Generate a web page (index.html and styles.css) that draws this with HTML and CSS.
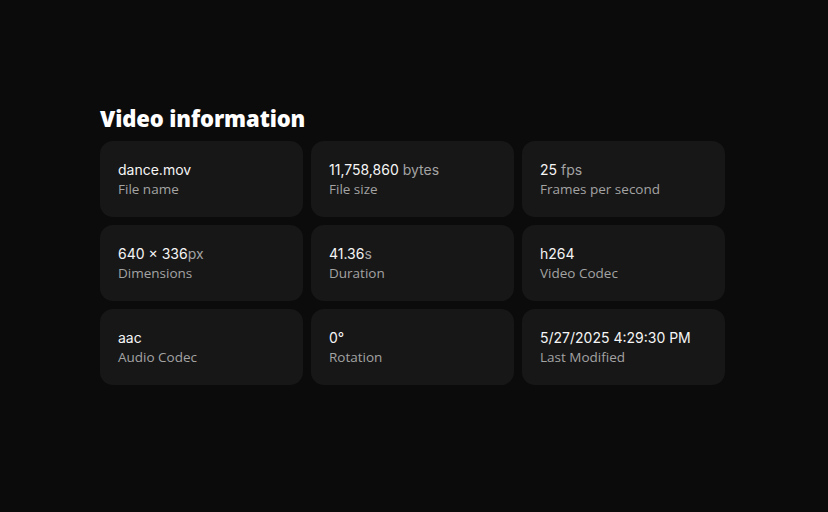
FILE: index.html
```html
<!DOCTYPE html>
<html>
<head>
<meta charset="utf-8">
<link rel="stylesheet" href="styles.css">
</head>
<body>
<main class="wrap">
  <h1 class="title">Video information</h1>
  <div class="grid">
    <div class="card"><div class="value">dance.mov</div><div class="label">File name</div></div>
    <div class="card"><div class="value">11,758,860 <span class="unit">bytes</span></div><div class="label">File size</div></div>
    <div class="card"><div class="value">25 <span class="unit">fps</span></div><div class="label">Frames per second</div></div>
    <div class="card"><div class="value">640 × 336<span class="unit">px</span></div><div class="label">Dimensions</div></div>
    <div class="card"><div class="value">41.36<span class="unit">s</span></div><div class="label">Duration</div></div>
    <div class="card"><div class="value">h264</div><div class="label">Video Codec</div></div>
    <div class="card"><div class="value">aac</div><div class="label">Audio Codec</div></div>
    <div class="card"><div class="value">0°</div><div class="label">Rotation</div></div>
    <div class="card"><div class="value">5/27/2025 4:29:30 PM</div><div class="label">Last Modified</div></div>
  </div>
</main>
</body>
</html>
```
FILE: styles.css
```css
html, body {
  margin: 0;
  padding: 0;
  background: #0b0b0b;
  height: 100%;
}
body {
  font-family: "Open Sans", "Noto Sans", sans-serif;
  color: #f5f5f5;
}
.wrap {
  width: 625px;
  margin-left: 100px;
  padding-top: 102px;
}
.title {
  margin: 0 0 7px 0;
  font-family: "Open Sans", "Noto Sans", sans-serif;
  font-weight: 800;
  font-size: 22px;
  line-height: 32px;
  letter-spacing: -0.1px;
  color: #ffffff;
}
.grid {
  display: grid;
  grid-template-columns: repeat(3, 1fr);
  column-gap: 8px;
  row-gap: 8px;
}
.card {
  background: #171717;
  border-radius: 13px;
  padding: 19px 18px 19px;
  height: 76px;
  box-sizing: border-box;
}
.value {
  font-family: Inter, "Liberation Sans", sans-serif;
  font-size: 14px;
  line-height: 20px;
  color: #f5f5f5;
}
.unit {
  color: #a3a3a3;
}
.label {
  font-family: "Open Sans", "Noto Sans", sans-serif;
  font-size: 13.5px;
  line-height: 18px;
  color: #a3a3a3;
}
```
